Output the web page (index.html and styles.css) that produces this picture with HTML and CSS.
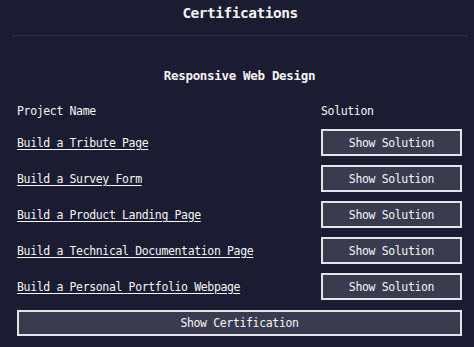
FILE: index.html
```html
<!DOCTYPE html>
<html lang="en">
<head>
    <meta charset="UTF-8">
    <meta name="viewport" content="width=device-width, initial-scale=1.0">
    <title>Certifications</title>
    <link rel="stylesheet" href="styles.css">
</head>
<body>
    <h1 class="page-title">Certifications</h1>
    <div class="divider"></div>

    <section class="cert">
        <h2 class="cert-title">Responsive Web Design</h2>

        <div class="projects">
            <div class="col-head">Project Name</div>
            <div class="col-head">Solution</div>

            <a href="#" class="project-link">Build a Tribute Page</a>
            <button class="btn">Show Solution</button>

            <a href="#" class="project-link">Build a Survey Form</a>
            <button class="btn">Show Solution</button>

            <a href="#" class="project-link">Build a Product Landing Page</a>
            <button class="btn">Show Solution</button>

            <a href="#" class="project-link">Build a Technical Documentation Page</a>
            <button class="btn">Show Solution</button>

            <a href="#" class="project-link">Build a Personal Portfolio Webpage</a>
            <button class="btn">Show Solution</button>
        </div>

        <button class="btn btn-wide">Show Certification</button>
    </section>
</body>
</html>
```

FILE: styles.css
```css
body {
    margin: 0;
    padding: 0 6px 0 12px;
    background-color: #1b1b32;
    color: #f5f6f7;
    font-family: 'DejaVu Sans Mono', 'Liberation Mono', monospace;
    font-size: 11.5px;
    letter-spacing: -0.36px;
}
.page-title {
    margin: 0;
    font-size: 14.5px;
    letter-spacing: -0.5px;
    line-height: 26px;
    text-align: center;
}
.divider {
    margin-top: 9px;
    height: 1px;
    background-color: #2d2d45;
}
.cert {
    padding: 0 6px 0 5px;
}
.cert-title {
    margin: 30px 0 0;
    font-size: 12.5px;
    letter-spacing: -0.32px;
    line-height: 20px;
    text-align: center;
}
.projects {
    display: grid;
    grid-template-columns: 1fr 141px;
    row-gap: 9px;
    align-items: center;
    margin-top: 15px;
}
.col-head {
    line-height: 20px;
    margin-bottom: -1px;
}
.project-link {
    color: #f5f6f7;
    text-decoration: underline;
    text-underline-offset: 2px;
}
.btn {
    box-sizing: border-box;
    height: 27px;
    width: 100%;
    padding: 0;
    background-color: #3b3b4f;
    border: 2px solid #e4e4e8;
    color: #f5f6f7;
    font-family: inherit;
    font-size: 11.5px;
    letter-spacing: -0.36px;
    cursor: pointer;
}
.btn-wide {
    display: block;
    height: 26px;
    margin-top: 10px;
}
```
